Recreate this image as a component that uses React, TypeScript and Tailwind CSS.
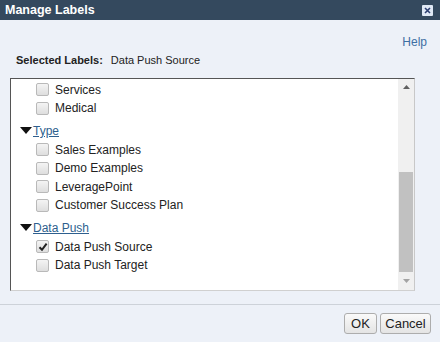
import React from 'react';

const font = { fontFamily: '"Liberation Sans", Arial, sans-serif' };

const Checkbox: React.FC<{ checked?: boolean }> = ({ checked }) => (
  <span className="relative inline-block w-[13px] h-[13px] rounded-[2px] border border-[#b9b9b9] bg-gradient-to-b from-[#f4f4f4] to-[#dedede]">
    {checked && (
      <svg className="absolute left-[1px] top-[1px]" width="10" height="10" viewBox="0 0 10 10">
        <path d="M1.5 5.2 L4 7.8 L8.6 1.6" fill="none" stroke="#222" strokeWidth="2" />
      </svg>
    )}
  </span>
);

const Item: React.FC<{ label: string; checked?: boolean }> = ({ label, checked }) => (
  <div className="flex items-center h-[18.5px] pl-[25px] gap-[6px]">
    <Checkbox checked={checked} />
    <span className="text-[12px] text-[#222]">{label}</span>
  </div>
);

const Group: React.FC<{ label: string }> = ({ label }) => (
  <div className="flex items-center h-[19px] mt-[4px] pl-[9px] gap-[1px]">
    <svg width="12" height="8" viewBox="0 0 12 8">
      <path d="M0 0 L12 0 L6 7 Z" fill="#111" />
    </svg>
    <span className="text-[12px] text-[#2e5f8e] underline">{label}</span>
  </div>
);

export default function App() {
  return (
    <div className="w-[440px] h-[342px] bg-[#edf1f8] flex flex-col overflow-hidden" style={font}>
      {/* Title bar */}
      <div className="h-[20px] bg-[#34495e] flex items-center justify-between pl-[5px] pr-[7px]">
        <span className="text-white font-bold text-[12.5px]">Manage Labels</span>
        <span className="w-[11px] h-[11px] bg-[#dfe8f4] flex items-center justify-center rounded-[1px]">
          <svg width="7" height="7" viewBox="0 0 7 7">
            <path d="M1 1 L6 6 M6 1 L1 6" stroke="#2c3e70" strokeWidth="1.6" />
          </svg>
        </span>
      </div>

      {/* Body */}
      <div className="flex flex-col px-[10px] pr-[25px]">
        <div className="flex justify-end mt-[13px] -mr-[12px]">
          <span className="text-[12px] text-[#3d6fa3]">Help</span>
        </div>
        <div className="flex items-center gap-[8px] mt-[1px] pl-[6px] text-[11px] text-[#222]">
          <span className="font-bold">Selected Labels:</span>
          <span>Data Push Source</span>
        </div>

        {/* List box */}
        <div className="mt-[9px] h-[213px] w-[405px] border border-[#555] border-r-[#c8c8c8] border-b-[#d0d0d0] bg-white flex">
          <div className="flex-1 pt-[2px] overflow-hidden">
            <Item label="Services" />
            <Item label="Medical" />
            <Group label="Type" />
            <Item label="Sales Examples" />
            <Item label="Demo Examples" />
            <Item label="LeveragePoint" />
            <Item label="Customer Success Plan" />
            <Group label="Data Push" />
            <Item label="Data Push Source" checked />
            <Item label="Data Push Target" />
          </div>
          <div className="w-[16px] bg-[#f0f0f0] flex flex-col items-center">
            <div className="h-[17px] flex items-center justify-center">
              <svg width="7" height="4" viewBox="0 0 7 4"><path d="M0 4 L3.5 0 L7 4 Z" fill="#606060" /></svg>
            </div>
            <div className="flex-1 w-full px-[1px] flex flex-col">
              <div className="h-[76px]" />
              <div className="h-[100px] bg-[#c1c1c1]" />
            </div>
            <div className="h-[17px] flex items-center justify-center">
              <svg width="7" height="4" viewBox="0 0 7 4"><path d="M0 0 L7 0 L3.5 4 Z" fill="#a3a3a3" /></svg>
            </div>
          </div>
        </div>
      </div>

      {/* Footer */}
      <div className="mt-[13px] border-t border-[#cdd2d9] flex justify-end gap-[3px] pr-[9px] pt-[8px]">
        <button className="h-[21px] w-[33px] rounded-[3px] border border-[#adadad] bg-gradient-to-b from-[#fafafa] to-[#e4e4e4] text-[13px] text-[#222]">OK</button>
        <button className="h-[21px] w-[51px] rounded-[3px] border border-[#adadad] bg-gradient-to-b from-[#fafafa] to-[#e4e4e4] text-[13px] text-[#222]">Cancel</button>
      </div>
    </div>
  );
}
